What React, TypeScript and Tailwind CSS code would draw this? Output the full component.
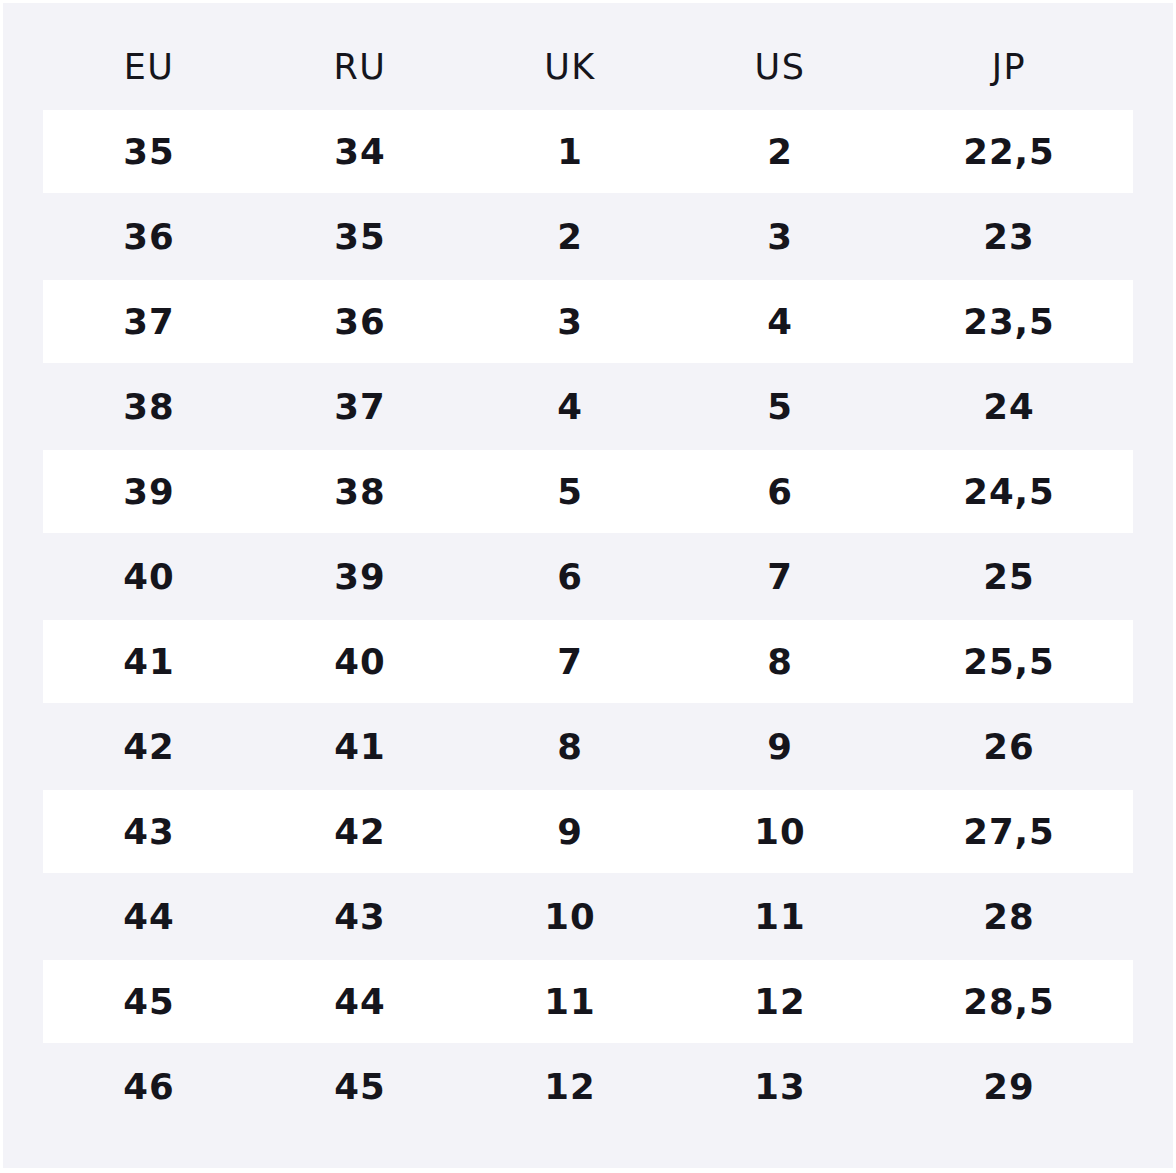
const headers = ["EU", "RU", "UK", "US", "JP"];

const sizes = [
  ["35", "34", "1", "2", "22,5"],
  ["36", "35", "2", "3", "23"],
  ["37", "36", "3", "4", "23,5"],
  ["38", "37", "4", "5", "24"],
  ["39", "38", "5", "6", "24,5"],
  ["40", "39", "6", "7", "25"],
  ["41", "40", "7", "8", "25,5"],
  ["42", "41", "8", "9", "26"],
  ["43", "42", "9", "10", "27,5"],
  ["44", "43", "10", "11", "28"],
  ["45", "44", "11", "12", "28,5"],
  ["46", "45", "12", "13", "29"],
];

const cols = "grid grid-cols-[212px_210px_210px_210px_1fr]";

const App = () => {
  return (
    <div className="bg-white p-[3px] pb-[5px] font-['DejaVu_Sans',sans-serif] text-[#15151c]">
      <div className="w-[1170px] bg-[#f3f3f8] px-[40px] pb-[38px]">
        {/* header */}
        <div className={`${cols} h-[107px] pt-[40px] text-[35px] leading-[48px] tracking-[1.5px]`}>
          {headers.map((h) => (
            <div key={h} className="text-center">
              {h}
            </div>
          ))}
        </div>

        {/* rows */}
        {sizes.map((row, i) => (
          <div
            key={row[0]}
            className={`${cols} items-center pt-[1px] text-[35.5px] font-bold tracking-[1px] ${
              i % 2 === 0 ? "h-[83px] bg-white" : "h-[87px]"
            }`}
          >
            {row.map((v, j) => (
              <div key={j} className="text-center">
                {v}
              </div>
            ))}
          </div>
        ))}
      </div>
    </div>
  );
};

export default App;
